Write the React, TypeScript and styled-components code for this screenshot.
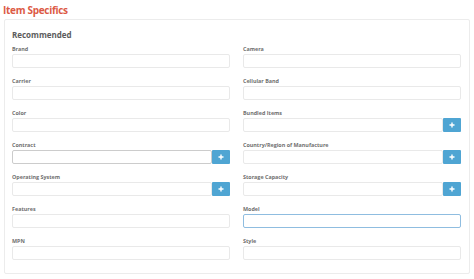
import styled, { createGlobalStyle } from "styled-components";

const GlobalStyle = createGlobalStyle`
  body {
    margin: 0;
    background: #ffffff;
    font-family: "Open Sans", "Liberation Sans", sans-serif;
  }
`;

const Page = styled.div`
  width: 474px;
  height: 279px;
  padding: 3px 4px 0 4px;
  box-sizing: border-box;
`;

const Title = styled.h2`
  margin: 0 0 2px -1px;
  font-size: 10px;
  line-height: 14px;
  font-weight: 700;
  letter-spacing: -0.3px;
  color: #dc5a45;
`;

const Panel = styled.div`
  border: 1px solid #ececec;
  border-radius: 2px;
  padding: 9px 8px 13px 7px;
`;

const SectionTitle = styled.h3`
  margin: 0 0 5px 0;
  font-size: 8px;
  line-height: 11px;
  font-weight: 700;
  color: #5c5c5c;
`;

const Grid = styled.div`
  display: grid;
  grid-template-columns: 218px 218px;
  column-gap: 13px;
  row-gap: 9px;
`;

const Field = styled.div`
  display: flex;
  flex-direction: column;
  gap: 1px;
`;

const Label = styled.label`
  font-size: 5.4px;
  line-height: 8px;
  font-weight: 700;
  color: #707070;
`;

const InputRow = styled.div`
  display: flex;
`;

const Input = styled.div<{ $state?: "default" | "active" | "focus" }>`
  flex: 1;
  height: 14px;
  box-sizing: border-box;
  border: 1px solid
    ${({ $state }) =>
      $state === "focus" ? "#8fbde0" : $state === "active" ? "#cccccc" : "#e9e9e9"};
  border-radius: 2px;
  background: #ffffff;
`;

const AddButton = styled.button`
  width: 18px;
  height: 14px;
  padding: 0;
  border: none;
  border-radius: 1px;
  background: #4fa5d3;
  color: #ffffff;
  display: flex;
  align-items: center;
  justify-content: center;
`;

type Item = { label: string; add?: boolean; state?: "default" | "active" | "focus" };

const ITEMS: Item[] = [
  { label: "Brand" },
  { label: "Camera" },
  { label: "Carrier" },
  { label: "Cellular Band" },
  { label: "Color" },
  { label: "Bundled Items", add: true },
  { label: "Contract", add: true, state: "active" },
  { label: "Country/Region of Manufacture", add: true },
  { label: "Operating System", add: true },
  { label: "Storage Capacity", add: true },
  { label: "Features" },
  { label: "Model", state: "focus" },
  { label: "MPN" },
  { label: "Style" },
];

const Plus = () => (
  <svg width="6" height="6" viewBox="0 0 6 6">
    <path d="M3 0.5v5M0.5 3h5" stroke="#ffffff" strokeWidth="1.4" />
  </svg>
);

export default function App() {
  return (
    <>
      <GlobalStyle />
      <Page>
        <Title>Item Specifics</Title>
        <Panel>
          <SectionTitle>Recommended</SectionTitle>
          <Grid>
            {ITEMS.map((item) => (
              <Field key={item.label}>
                <Label>{item.label}</Label>
                <InputRow>
                  <Input $state={item.state} />
                  {item.add && (
                    <AddButton>
                      <Plus />
                    </AddButton>
                  )}
                </InputRow>
              </Field>
            ))}
          </Grid>
        </Panel>
      </Page>
    </>
  );
}
